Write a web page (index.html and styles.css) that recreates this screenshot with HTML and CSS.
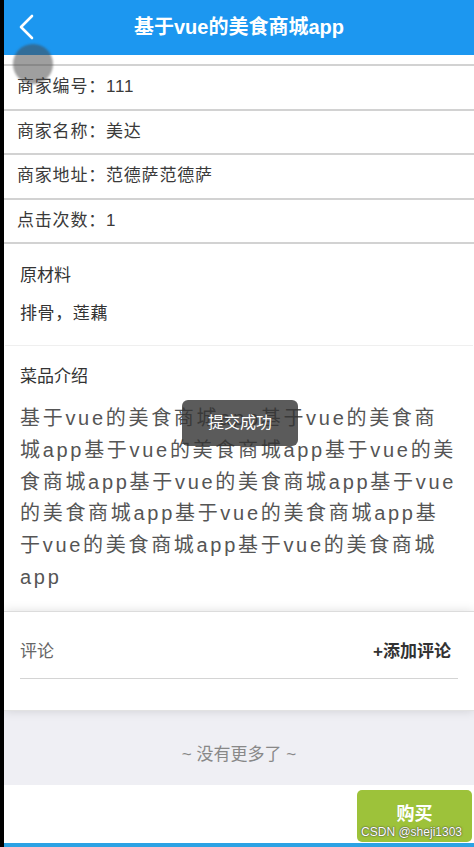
FILE: index.html
```html
<!DOCTYPE html>
<html lang="zh-CN">
<head>
<meta charset="utf-8">
<title>基于vue的美食商城app</title>
<link rel="stylesheet" href="styles.css">
</head>
<body>
<div class="app">
  <header class="topbar">
    <span class="back">
      <svg width="16" height="26" viewBox="0 0 16 26"><polyline points="13,2 2,13 13,24" fill="none" stroke="#fff" stroke-width="2.6" stroke-linecap="round" stroke-linejoin="round"/></svg>
    </span>
    <h1 class="title">基于vue的美食商城app</h1>
    <span class="spacer"></span>
  </header>

  <ul class="info">
    <li class="info-row">商家编号：111</li>
    <li class="info-row">商家名称：美达</li>
    <li class="info-row">商家地址：范德萨范德萨</li>
    <li class="info-row">点击次数：1</li>
  </ul>

  <section class="block block-line">
    <h2 class="label">原材料</h2>
    <p class="value">排骨，莲藕</p>
  </section>

  <section class="block block-desc">
    <h2 class="label">菜品介绍</h2>
    <p class="desc">基于vue的美食商城app基于vue的美食商城app基于vue的美食商城app基于vue的美食商城app基于vue的美食商城app基于vue的美食商城app基于vue的美食商城app基于vue的美食商城app基于vue的美食商城app</p>
  </section>

  <section class="comments">
    <div class="comments-head">
      <span class="comments-title">评论</span>
      <span class="comments-add">+添加评论</span>
    </div>
  </section>

  <div class="nomore">~ 没有更多了 ~</div>

  <footer class="buybar">
    <button class="buy">购买</button>
  </footer>
  <div class="bottomline"></div>

  <div class="touch"></div>
  <div class="toast">提交成功</div>
  <div class="watermark">CSDN @sheji1303</div>
</div>
</body>
</html>
```

FILE: styles.css
```css
* { box-sizing: border-box; }
html, body { margin: 0; padding: 0; }
body {
  background: #000;
  font-family: "Liberation Sans", "Noto Sans CJK SC", sans-serif;
  overflow: hidden;
}
.app {
  position: relative;
  margin-left: 4px;
  height: 847px;
  background: #fff;
  display: flex;
  flex-direction: column;
  overflow: hidden;
}
.topbar {
  height: 55px;
  flex: none;
  background: #1c97f0;
  display: grid;
  grid-template-columns: 48px 1fr 48px;
  align-items: center;
}
.back {
  display: flex;
  align-items: center;
  padding-left: 15px;
  height: 55px;
  padding-bottom: 2px;
}
.back svg { display: block; }
.title {
  margin: 0;
  text-align: center;
  color: #fff;
  font-size: 20px;
  font-weight: bold;
  line-height: 55px;
}
.info {
  list-style: none;
  margin: 0;
  padding: 9px 0 0;
  flex: none;
}
.info-row {
  height: 44.5px;
  line-height: 42.5px;
  border-bottom: 2px solid #d2d2d2;
  padding-left: 13px;
  font-size: 17px;
  letter-spacing: 0.8px;
  color: #3a3a3a;
}
.info-row:first-child {
  height: 46.5px;
  border-top: 2px solid #d2d2d2;
}
.block {
  padding: 21px 16px 20px;
  flex: none;
}
.block-line {
  border-bottom: 1px solid #efefef;
  margin: 0 1px;
  padding-left: 15px;
}
.block-desc { padding-top: 20px; padding-right: 17.5px; padding-bottom: 17px; }
.label {
  margin: 0;
  font-size: 17px;
  font-weight: normal;
  line-height: 22px;
  color: #333;
}
.value {
  margin: 16px 0 0;
  font-size: 17px;
  line-height: 22px;
  letter-spacing: 0.6px;
  color: #333;
}
.desc {
  margin: 15px 0 0;
  font-size: 20px;
  line-height: 31.8px;
  letter-spacing: 2.7px;
  color: #555;
}
.comments {
  position: relative;
  z-index: 1;
  flex: none;
  background: #fff;
  height: 100px;
  padding: 0 16px;
  border-top: 1px solid #dcdcdc;
  border-bottom: 1px solid #e2e2e2;
  box-shadow: 0 0 10px rgba(0, 0, 0, 0.13);
}
.comments-head {
  display: flex;
  justify-content: space-between;
  align-items: center;
  padding-top: 29px;
  padding-bottom: 15px;
  border-bottom: 1px solid #d4d4d4;
  line-height: 22px;
}
.comments-title { font-size: 17px; color: #666; }
.comments-add {
  font-size: 17px;
  font-weight: bold;
  color: #333;
  margin-right: 7px;
}
.nomore {
  flex: none;
  height: 74px;
  background: #efeff4;
  text-align: center;
  padding-top: 33px;
  line-height: 22px;
  font-size: 17px;
  color: #888;
}
.buybar {
  flex: none;
  height: 58px;
  display: flex;
  justify-content: flex-end;
  align-items: flex-start;
  padding: 5px 2px 0 0;
  background: #fff;
}
.buy {
  width: 115px;
  height: 52px;
  border: none;
  border-radius: 5px;
  background: #9dc23a;
  color: #fff;
  font-family: "Liberation Sans", "Noto Sans CJK SC", sans-serif;
  font-size: 18px;
  font-weight: bold;
  padding: 0 0 8px;
}
.bottomline {
  flex: none;
  height: 4px;
  background: #2ba2e4;
}
.touch {
  position: absolute;
  left: 9px;
  top: 44px;
  width: 40px;
  height: 40px;
  border-radius: 50%;
  background: rgba(70, 70, 70, 0.52);
  filter: blur(1px);
}
.toast {
  position: absolute;
  left: 178px;
  top: 400px;
  width: 116px;
  height: 46px;
  border-radius: 6px;
  background: rgba(50, 50, 50, 0.8);
  color: #fff;
  font-size: 16px;
  line-height: 46px;
  text-align: center;
}
.watermark {
  position: absolute;
  right: 12px;
  top: 824px;
  font-size: 12px;
  line-height: 16px;
  color: #fff;
  text-shadow: 0 0 2px #444, 0 0 1px #444;
}
```
